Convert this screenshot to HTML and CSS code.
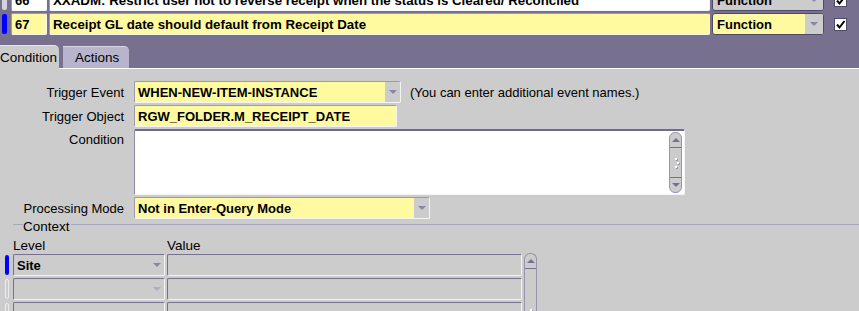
FILE: index.html
```html
<!DOCTYPE html>
<html lang="en">
<head>
  <meta charset="UTF-8">
  <title>Personalization - Condition</title>
  <link rel="stylesheet" href="styles.css">
</head>
<body>
  <!-- records block (multi-row) -->
  <div class="records">
    <div class="rec-list">
      <div class="rec">
        <span class="marker"></span>
        <div class="fld num white">66</div>
        <div class="fld desc white">XXADM: Restrict user not to reverse receipt when the status is Cleared/ Reconciled</div>
        <div class="fld combo kind gray"><span class="val">Function</span><span class="btn"><i class="arrow"></i></span></div>
        <span class="check"><svg width="13" height="13" viewBox="0 0 13 13"><path d="M3 6.5 L5.5 9.5 L10.5 3" fill="none" stroke="#000" stroke-width="2"/></svg></span>
      </div>
      <div class="rec">
        <span class="marker on"></span>
        <div class="fld num yellow">67</div>
        <div class="fld desc yellow">Receipt GL date should default from Receipt Date</div>
        <div class="fld combo kind yellow"><span class="val">Function</span><span class="btn"><i class="arrow"></i></span></div>
        <span class="check"><svg width="13" height="13" viewBox="0 0 13 13"><path d="M3 6.5 L5.5 9.5 L10.5 3" fill="none" stroke="#000" stroke-width="2"/></svg></span>
      </div>
    </div>
  </div>

  <div class="tabs">
    <div class="tab active">Condition</div>
    <div class="tab">Actions</div>
  </div>

  <div class="panel">
    <div class="frow">
      <label>Trigger Event</label>
      <div class="fld combo event yellow"><span class="val">WHEN-NEW-ITEM-INSTANCE</span><span class="btn"><i class="arrow"></i></span></div>
      <span class="hint">(You can enter additional event names.)</span>
    </div>
    <div class="frow">
      <label>Trigger Object</label>
      <div class="fld object yellow">RGW_FOLDER.M_RECEIPT_DATE</div>
    </div>
    <div class="frow top">
      <label>Condition</label>
      <div class="fld cond white">
        <div class="area"></div>
        <div class="vscroll">
          <span class="up"></span>
          <span class="grip"><i></i><i></i><i></i></span>
          <span class="down"></span>
        </div>
      </div>
    </div>
    <div class="frow">
      <label>Processing Mode</label>
      <div class="fld combo mode yellow"><span class="val">Not in Enter-Query Mode</span><span class="btn"><i class="arrow"></i></span></div>
    </div>

    <div class="context">
      <div class="legend"><span class="line short"></span><span class="title">Context</span><span class="line long"></span></div>
      <div class="ctx-head"><span class="h-level">Level</span><span class="h-value">Value</span></div>
      <div class="ctx-body">
        <div class="ctx-rows">
          <div class="crow">
            <span class="marker small on"></span>
            <div class="fld combo level plain"><span class="val">Site</span><span class="btn"><i class="arrow"></i></span></div>
            <div class="fld value plain"></div>
          </div>
          <div class="crow">
            <span class="marker small"></span>
            <div class="fld combo level plain"><span class="val"></span><span class="btn"><i class="arrow dim"></i></span></div>
            <div class="fld value plain"></div>
          </div>
          <div class="crow">
            <span class="marker small"></span>
            <div class="fld combo level plain"><span class="val"></span><span class="btn"><i class="arrow dim"></i></span></div>
            <div class="fld value plain"></div>
          </div>
        </div>
        <div class="vscroll tall">
          <span class="up"></span>
          <span class="grip"><i></i><i></i><i></i></span>
        </div>
      </div>
    </div>
  </div>
</body>
</html>
```

FILE: styles.css
```css
body {
  margin: 0;
  background: #cccccc;
  font-family: "Liberation Sans", Arial, sans-serif;
  font-size: 13px;
  color: #000;
  width: 859px;
  height: 311px;
  overflow: hidden;
}

/* generic field */
.fld {
  box-sizing: border-box;
  height: 22px;
  border: 1px solid;
  border-color: #9d99b3 #f4f4f4 #f4f4f4 #9d99b3;
  border-radius: 2px;
  display: flex;
  align-items: center;
  padding-left: 3px;
  font-weight: bold;
  white-space: nowrap;
  overflow: hidden;
}
.yellow { background: #fffaa0; }
.white { background: #ffffff; }
.gray { background: #cccccc; }
.plain { background: #cccccc; }

.combo { padding-right: 0; }
.combo .val { flex: 1; overflow: hidden; }
.combo .btn {
  width: 15px;
  height: 100%;
  background: #cccccc;
  display: flex;
  align-items: center;
  justify-content: center;
}
.arrow {
  width: 0;
  height: 0;
  border-left: 4px solid transparent;
  border-right: 4px solid transparent;
  border-top: 4px solid #8a86a2;
}
.arrow.dim { border-top-color: #b0adbf; }

/* records */
.records {
  background: #77718f;
  height: 45px;
  overflow: hidden;
}
.rec-list { margin-top: -11px; }
.rec {
  display: flex;
  align-items: center;
  height: 22px;
  margin-bottom: 2px;
}
.marker {
  width: 5px;
  height: 20px;
  margin: 0 4px 0 2px;
  border-radius: 2px;
  background: #d4d3dc;
}
.marker.on { background: #0000ff; }
.num { width: 36px; margin-right: 2px; }
.desc { width: 661px; margin-right: 2px; padding-left: 3px; font-size: 13.3px; }
.kind {
  width: 112px;
  border: 1px solid #4f4a6a;
  border-radius: 3px;
  padding-left: 4px;
}
.kind .btn { width: 18px; }
.check {
  width: 13px;
  height: 13px;
  margin-left: 10px;
  background: #fff;
  border: 1px solid #4f4a6a;
  box-sizing: border-box;
  display: flex;
}
.check svg { margin: -1px; }

/* tabs */
.tabs {
  background: #77718f;
  display: flex;
  align-items: flex-end;
  height: 23px;
  border-bottom: 1px solid #ffffff;
}
.tab {
  box-sizing: border-box;
  height: 22px;
  width: 66px;
  padding-left: 12px;
  margin-left: 4px;
  background: #b8b4cb;
  border-radius: 0 5px 0 0;
  border-top: 1px solid #d8d6e4;
  display: flex;
  align-items: center;
  font-size: 13.5px;
}
.tab.active {
  width: 59px;
  margin-left: 0;
  padding-left: 0;
  background: #cccccc;
  height: 24px;
  margin-bottom: -1px;
  border-top-color: #e4e4ea;
}

/* condition panel */
.panel { padding-top: 12px; }
.frow {
  display: flex;
  align-items: center;
  margin-bottom: 2px;
}
.frow.top { align-items: flex-start; margin-bottom: 2px; }
.frow label {
  width: 124px;
  text-align: right;
  margin-right: 10px;
}
.frow.top label { padding-top: 3px; }
.event { width: 267px; }
.hint { margin-left: 9px; }
.object { width: 263px; }
.cond {
  width: 551px;
  height: 66px;
  padding: 0;
  align-items: stretch;
  border-top: 2px solid #706b8c;
  border-left: 1px solid #8d89a6;
}
.cond .area { flex: 1; background: #fff; }
.mode { width: 296px; }

/* scrollbars */
.vscroll {
  width: 13px;
  margin: 1px 2px 1px 1px;
  border: 1px solid #9894ae;
  border-radius: 6px;
  background: #cccccc;
  display: flex;
  flex-direction: column;
  box-sizing: border-box;
}
.vscroll .up,
.vscroll .down {
  height: 14px;
  display: flex;
  align-items: center;
  justify-content: center;
}
.vscroll .up { border-bottom: 1px solid #77718f; }
.vscroll .down { border-top: 1px solid #77718f; }
.vscroll .up::before,
.vscroll .down::before {
  content: "";
  border-left: 4px solid transparent;
  border-right: 4px solid transparent;
}
.vscroll .up::before { border-bottom: 4px solid #77718f; }
.vscroll .down::before { border-top: 4px solid #77718f; }
.vscroll .grip {
  flex: 1;
  display: flex;
  flex-direction: column;
  align-items: center;
  justify-content: center;
  gap: 2px;
}
.vscroll .grip i {
  width: 2px;
  height: 2px;
  background: #fff;
  box-shadow: 1px 1px 0 #9894ae;
}
.vscroll .grip i:nth-child(2) { margin-left: 4px; }

/* context */
.context { margin-top: 5px; }
.legend {
  display: flex;
  align-items: flex-start;
  height: 14px;
}
.legend .line {
  height: 1px;
  background: #aaa6c0;
}
.legend .short { width: 10px; margin-left: 13px; }
.legend .long { flex: 1; }
.legend .title { font-size: 13.5px; margin: -5px 1px 0 0; line-height: 16px; }
.ctx-head {
  display: flex;
  font-size: 13.5px;
  height: 16px;
  line-height: 16px;
}
.h-level { margin-left: 13px; width: 154px; }
.ctx-body { display: flex; }
.ctx-rows { display: flex; flex-direction: column; }
.crow {
  display: flex;
  align-items: center;
  height: 22px;
  margin-bottom: 2px;
}
.marker.small {
  width: 4px;
  margin: 0 4px 0 5px;
  background: #cccccc;
  border: 1px solid #ececf0;
  box-sizing: border-box;
}
.marker.small.on { background: #0000ff; border: none; }
.level {
  width: 152px;
  margin-right: 2px;
  border: 1px solid;
  border-color: #77718f #f4f4f4 #f4f4f4 #77718f;
}
.value {
  width: 355px;
  border-color: #77718f #f4f4f4 #f4f4f4 #77718f;
}
.vscroll.tall {
  height: 70px;
  margin: -1px 0 0 2px;
  border-bottom: none;
  border-radius: 6px 6px 0 0;
}
.vscroll.tall .grip { justify-content: flex-end; padding-bottom: 4px; }
```
